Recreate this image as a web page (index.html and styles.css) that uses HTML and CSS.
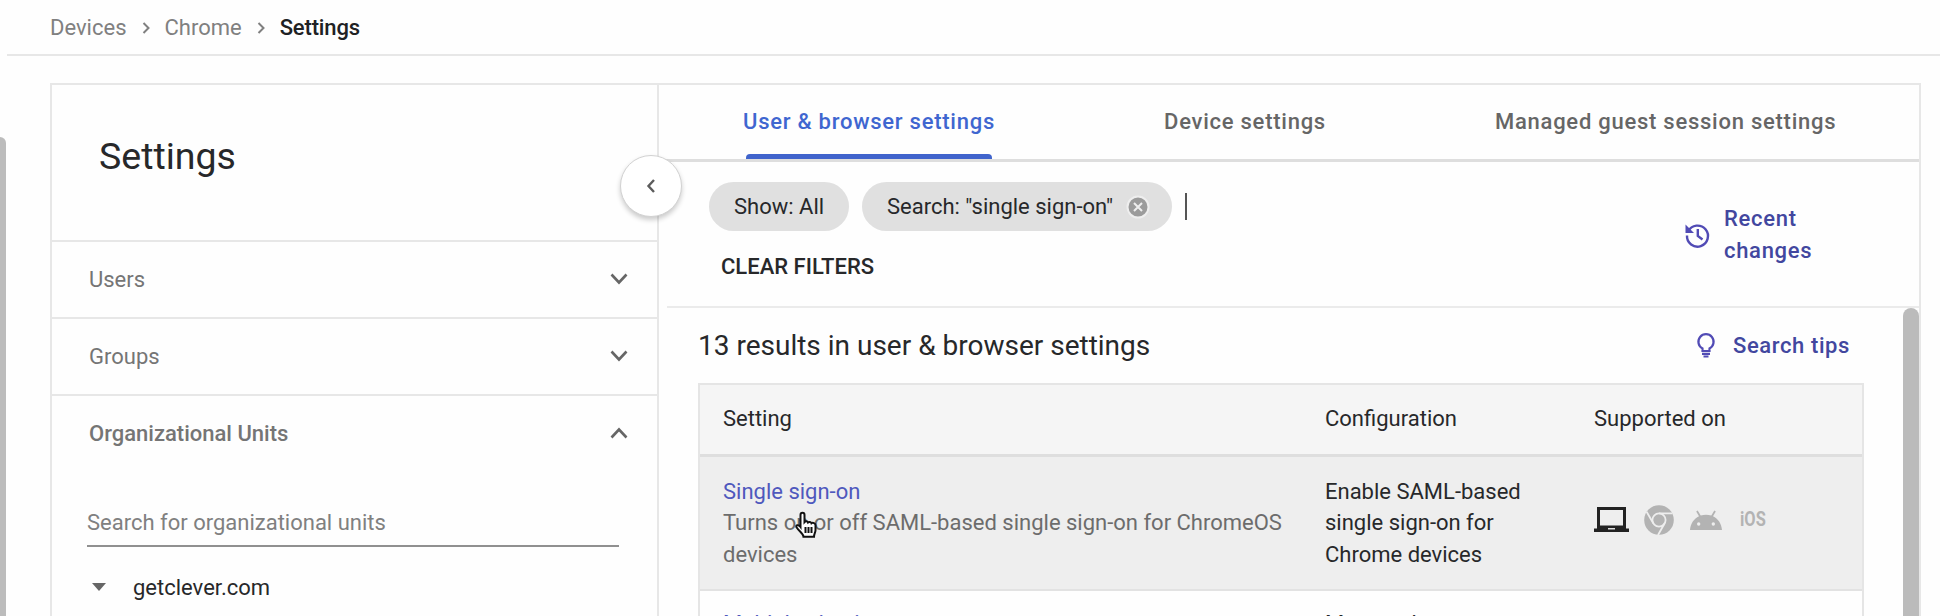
FILE: index.html
```html
<!DOCTYPE html>
<html lang="en">
<head>
  <meta charset="UTF-8" />
  <title>Settings</title>
  <link rel="stylesheet" href="styles.css">
</head>
<body>
  <div class="page-scroll"></div>

  <div class="page">
    <nav class="breadcrumb">
      <span class="crumb">Devices</span>
      <svg class="sep" viewBox="0 0 8 12"><path d="M1.5 1l5 5-5 5" /></svg>
      <span class="crumb">Chrome</span>
      <svg class="sep" viewBox="0 0 8 12"><path d="M1.5 1l5 5-5 5" /></svg>
      <span class="crumb current">Settings</span>
    </nav>

    <div class="card">
      <aside class="sidebar">
        <h1>Settings</h1>
        <div class="section"><span>Users</span><svg class="chevron" viewBox="0 0 18 12"><path d="M1.5 1.5L9 9.5l7.5-8" /></svg></div>
        <div class="section"><span>Groups</span><svg class="chevron" viewBox="0 0 18 12"><path d="M1.5 1.5L9 9.5l7.5-8" /></svg></div>
        <div class="section open"><span>Organizational Units</span><svg class="chevron" viewBox="0 0 18 12"><path d="M1.5 10.5L9 2.5l7.5 8" /></svg></div>
        <div class="org-search"><span>Search for organizational units</span></div>
        <div class="org"><span class="caret"></span><span class="org-name">getclever.com</span></div>
        <button class="collapse"><svg viewBox="0 0 10 16"><path d="M8 2L2.5 8 8 14" /></svg></button>
      </aside>

      <main class="main">
        <div class="tabs">
          <div class="tab active"><span>User &amp; browser settings</span></div>
          <div class="tab"><span>Device settings</span></div>
          <div class="tab"><span>Managed guest session settings</span></div>
        </div>

        <div class="filters">
          <div class="chips">
            <div class="chip show-all"><span>Show: All</span></div>
            <div class="chip query">
              <span>Search: "single sign-on"</span>
              <svg class="remove" viewBox="0 0 22 22"><circle cx="11" cy="11" r="10.5" /><path d="M7 7l8 8M15 7l-8 8" /></svg>
            </div>
            <div class="caret-line"></div>
            <div class="clear"><span>CLEAR FILTERS</span></div>
          </div>
          <a class="recent">
            <svg viewBox="0 0 24 24"><path d="M3.2 8.2A10.5 10.5 0 1 1 2 12.5M12.8 6v7l4.7 3.5" /><path class="arrow" d="M.5 1.5V10H9z" /></svg>
            <span>Recent<br>changes</span>
          </a>
        </div>

        <div class="results">
          <div class="content">
            <div class="results-head">
              <h2><span>13 results in user &amp; browser settings</span></h2>
              <a class="tips">
                <svg viewBox="0 0 18 25"><path d="M5.5 18v-2.5a7.6 7.6 0 1 1 7 0V18zM5 20.8h8M6.5 23.5h5" /></svg>
                <span>Search tips</span>
              </a>
            </div>

            <div class="table">
              <div class="row head">
                <div>Setting</div>
                <div>Configuration</div>
                <div>Supported on</div>
              </div>
              <div class="row hovered">
                <div>
                  <a class="name">Single sign-on</a>
                  <p class="desc">Turns on or off SAML-based single sign-on for ChromeOS devices</p>
                  <svg class="pointer" viewBox="0 0 24 28"><path d="M6.5 16V4c0-3 4-3 4 0v7c1-1.2 3-1 3.5.5 1-1 3-.7 3.5.8 1.3-.9 4-.3 4 2v5c0 2-1.5 3.5-1.5 6.5H9.5c0-3-4-5-7-9.5-1-2 1.5-3.5 4-.3z" /><path d="M11.5 16v6M14.5 16v6M17.5 16v6" /></svg>
                </div>
                <div class="config">Enable SAML-based single sign-on for Chrome devices</div>
                <div class="platforms">
                  <svg class="laptop" viewBox="0 0 35 25"><path d="M3 0h29v21.5h3V25H0v-3.5h3zM6 3v15.5h23V3z" fill-rule="evenodd" /><path class="notch" d="M14 21h7v1.5h-7z" /></svg>
                  <svg class="chrome" viewBox="0 0 30 30"><circle cx="15" cy="15" r="14.8" /><circle class="line" cx="15" cy="15" r="6.6" /><path class="line" d="M15 8.4h13.5M9.3 18.3L2.6 6.7M20.7 18.3L14 30" /></svg>
                  <svg class="android" viewBox="0 0 32 20"><path d="M0 20C.5 13.5 4 8.5 9 6.2L6.2 1.5l1.5-1 3 5a17 17 0 0 1 10.6 0l3-5 1.5 1L23 6.2c5 2.3 8.5 7.3 9 13.8z" /><circle class="eye" cx="8.7" cy="14" r="1.7" /><circle class="eye" cx="23.3" cy="14" r="1.7" /></svg>
                  <span class="ios">iOS</span>
                </div>
              </div>
              <div class="row next">
                <div><a class="name">Multiple sign-in</a></div>
                <div class="config">Managed users must</div>
                <div></div>
              </div>
            </div>
          </div>
          <div class="scrollbar"></div>
        </div>
      </main>
    </div>
  </div>
</body>
</html>
```
FILE: styles.css
```css
* {
  box-sizing: border-box;
}

body {
  margin: 0;
  height: 616px;
  overflow: hidden;
  display: flex;
  background: #fefefe;
  color: #27282a;
  font-family: Roboto, sans-serif;
  font-size: 22px;
}

svg {
  display: block;
  flex: none;
  fill: none;
  overflow: visible;
}

.page-scroll {
  width: 6px;
  margin-top: 137px;
  background: #bcbcbc;
  border-radius: 0 6px 0 0;
}

.page {
  flex: 1;
  padding-left: 1px;
}

.breadcrumb {
  height: 56px;
  padding: 1px 0 0 43px;
  display: flex;
  align-items: center;
  border-bottom: 2px solid #e7e7e7;
  color: #808080;
}

.sep {
  width: 8px;
  height: 12px;
  margin: 0 15px;
  stroke: #808080;
  stroke-width: 2;
}

.current {
  color: #202124;
  font-weight: 500;
  letter-spacing: -0.15px;
}

.card {
  width: 1871px;
  height: 540px;
  margin: 27px 0 0 43px;
  border: 2px solid #e7e7e7;
  border-bottom: none;
  display: flex;
}

.sidebar {
  position: relative;
  flex: none;
  width: 607px;
  border-right: 2px solid #e7e7e7;
}

.sidebar h1 {
  margin: 0;
  height: 155px;
  padding: 0 0 13px 47px;
  display: flex;
  align-items: center;
  font-size: 37.5px;
  font-weight: 400;
}

.section {
  height: 77px;
  padding: 0 29px 1px 37px;
  display: flex;
  align-items: center;
  justify-content: space-between;
  border-top: 2px solid #e7e7e7;
  color: #757575;
}

.open {
  font-weight: 500;
}

.chevron {
  width: 18px;
  height: 12px;
  stroke: #666;
  stroke-width: 2.6;
}

.org-search {
  width: 532px;
  height: 76px;
  margin-left: 35px;
  padding-top: 39px;
  border-bottom: 2px solid #909090;
  line-height: 26px;
  color: #808080;
}

.org {
  display: flex;
  align-items: center;
  height: 80px;
  padding-left: 40px;
}

.caret {
  border: 7.5px solid transparent;
  border-top: 8px solid #666;
  border-bottom: none;
}

.org-name {
  margin-left: 27px;
}

/* round button sitting on the divider */
.collapse {
  position: absolute;
  z-index: 1;
  top: 70px;
  right: -25px;
  width: 62px;
  height: 62px;
  padding: 0;
  display: flex;
  align-items: center;
  justify-content: center;
  border: 1px solid #d2d2d2;
  border-radius: 50%;
  background: #fff;
  box-shadow: 0 3px 5px rgba(0, 0, 0, 0.2);
}

.collapse svg {
  width: 10px;
  height: 16px;
  stroke: #5c5c5c;
  stroke-width: 2.4;
}

.main {
  flex: 1;
  min-width: 0;
  display: flex;
  flex-direction: column;
}

.tabs {
  height: 77px;
  padding-bottom: 1px;
  display: flex;
  border-bottom: 3px solid #dedede;
  color: #666;
  font-weight: 500;
  letter-spacing: 0.75px;
  white-space: nowrap;
}

.tab {
  position: relative;
  flex: none;
  padding: 0 84px 0 85px;
  display: flex;
  align-items: center;
}

.tab:first-child {
  padding-left: 84px;
}

.tab:last-child {
  padding-right: 0;
}

.active {
  color: #3f66d0;
}

.active::after {
  content: "";
  position: absolute;
  left: 87px;
  right: 87px;
  bottom: -1px;
  height: 5px;
  border-radius: 4px 4px 0 0;
  background: #4064cc;
}

.filters {
  height: 146px;
  margin-left: 8px;
  display: flex;
  justify-content: space-between;
  border-bottom: 2px solid #ebebeb;
}

.chips {
  width: 640px;
  padding: 20px 0 0 42px;
  display: flex;
  flex-wrap: wrap;
  align-content: flex-start;
  align-items: center;
}

.chip {
  height: 49px;
  padding: 0 23px 0 25px;
  display: flex;
  align-items: center;
  border-radius: 25px;
  background: #e0e0e0;
}

.show-all {
  width: 140px;
}

.query {
  width: 310px;
  margin-left: 13px;
  justify-content: space-between;
}

.remove {
  width: 22px;
  height: 22px;
  fill: #9b9b9b;
  stroke: #eee;
  stroke-width: 2;
}

.caret-line {
  width: 2px;
  height: 27px;
  margin-left: 13px;
  background: #555;
}

.clear {
  width: 100%;
  padding: 23px 0 0 12px;
  font-weight: 500;
}

.recent {
  width: 234px;
  padding-top: 2px;
  display: flex;
  align-items: center;
  gap: 15px;
  color: #42479f;
  font-weight: 500;
  line-height: 32px;
  letter-spacing: 0.7px;
}

.recent svg {
  width: 24px;
  height: 24px;
  stroke: #514bb5;
  stroke-width: 2.4;
}

.recent .arrow {
  fill: #514bb5;
  stroke: none;
}

.results {
  flex: 1;
  min-height: 0;
  display: flex;
  justify-content: space-between;
}

.content {
  width: 1166px;
  margin-left: 39px;
}

.results-head {
  height: 75px;
  padding-right: 14px;
  display: flex;
  align-items: center;
  justify-content: space-between;
}

.results-head h2 {
  margin: 0;
  font-size: 28px;
  font-weight: 400;
}

.tips {
  display: flex;
  align-items: center;
  gap: 18px;
  color: #42479f;
  font-weight: 500;
  letter-spacing: 0.6px;
}

.tips svg {
  width: 18px;
  height: 25px;
  stroke: #514bb5;
  stroke-width: 2.2;
}

.table {
  border: 2px solid #e5e5e5;
}

.row {
  display: grid;
  grid-template-columns: 602px 269px 1fr;
  padding: 18px 0 0 23px;
  line-height: 31.7px;
}

.head {
  height: 72px;
  border-bottom: 3px solid #dedede;
  background: #f5f5f5;
}

.hovered {
  height: 134px;
  padding-top: 18.5px;
  border-bottom: 2px solid #e2e2e2;
  background: #eee;
}

.next {
  padding-top: 17px;
}

.row > div {
  position: relative;
}

.name {
  color: #4f58bd;
}

.desc {
  width: 575px;
  margin: 0;
  color: #6c6c6c;
}

.config {
  width: 210px;
}

/* hand cursor over the description text */
.pointer {
  position: absolute;
  left: 71px;
  top: 35px;
  width: 24px;
  height: 28px;
  fill: #fff;
  stroke: #111;
  stroke-width: 2;
}

.platforms {
  height: 88px;
  display: flex;
  align-items: center;
}

.platforms svg {
  fill: #b3b3b3;
}

.platforms .laptop {
  width: 35px;
  height: 25px;
  fill: #222;
}

.platforms .notch {
  fill: #ddd;
}

.chrome {
  width: 30px;
  height: 30px;
  margin-left: 15px;
}

.platforms .line {
  fill: none;
  stroke: #eee;
  stroke-width: 1.8;
}

.android {
  width: 32px;
  height: 20px;
  margin-left: 16px;
}

.platforms .eye {
  fill: #eee;
}

.ios {
  margin-left: 18px;
  color: #b3b3b3;
  font-size: 21px;
  font-weight: 700;
  transform: scaleX(0.78);
  transform-origin: left;
}

.scrollbar {
  width: 16px;
  background: #bbb;
  border-radius: 8px 8px 0 0;
}
```
